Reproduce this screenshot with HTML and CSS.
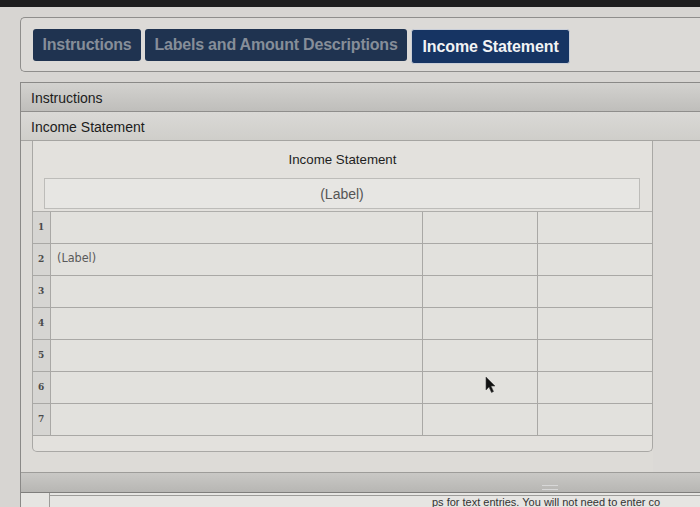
FILE: index.html
```html
<!DOCTYPE html>
<html>
<head>
<meta charset="utf-8">
<link rel="stylesheet" href="styles.css">
</head>
<body>
<div class="topbar"></div>
<div class="wrap">
  <div class="tabbox">
    <div class="tab t1">Instructions</div>
    <div class="tab t2">Labels and Amount Descriptions</div>
    <div class="tab active">Income Statement</div>
  </div>
  <div class="panel">
    <div class="hdr hdr1">Instructions</div>
    <div class="hdr hdr2">Income Statement</div>
    <div class="content">
      <div class="sheet">
        <div class="title">Income Statement</div>
        <div class="labelbox">(Label)</div>
        <div class="grid">
          <div class="row"><div class="num">1</div><div class="c lbl"></div><div class="c amt"></div><div class="c amt"></div></div>
          <div class="row"><div class="num">2</div><div class="c lbl">(Label)</div><div class="c amt"></div><div class="c amt"></div></div>
          <div class="row"><div class="num">3</div><div class="c lbl"></div><div class="c amt"></div><div class="c amt"></div></div>
          <div class="row"><div class="num">4</div><div class="c lbl"></div><div class="c amt"></div><div class="c amt"></div></div>
          <div class="row"><div class="num">5</div><div class="c lbl"></div><div class="c amt"></div><div class="c amt"></div></div>
          <div class="row"><div class="num">6</div><div class="c lbl"></div><div class="c amt"></div><div class="c amt"></div></div>
          <div class="row"><div class="num">7</div><div class="c lbl"></div><div class="c amt"></div><div class="c amt"></div></div>
        </div>
      </div>
      <div class="side"></div>
    </div>
    <div class="bar"><span class="grip"></span></div>
    <div class="next">
      <div class="nbox"></div>
      <div class="ntext">ps for text entries. You will not need to enter co</div>
    </div>
  </div>
</div>
<svg class="cursor" width="12" height="18" viewBox="0 0 12 18"><path d="M1 1 L1 14 L4 11 L6.5 16.5 L8.5 15.5 L6 10 L10 10 Z" fill="#111" stroke="#444" stroke-width="0.6"/></svg>
</body>
</html>
```
FILE: styles.css
```css
html, body {
  margin: 0;
  padding: 0;
  height: 507px;
  overflow: hidden;
}
body {
  background: #d7d5d2;
  font-family: "Liberation Sans", Arial, sans-serif;
  position: relative;
}
.topbar {
  height: 7px;
  background: #1d1d1e;
}
.wrap {
  padding-left: 20px;
}
.tabbox {
  margin-top: 10px;
  border: 1px solid #8f8e8c;
  border-right: none;
  border-radius: 5px 0 0 5px;
  background: #dcdad7;
  padding: 11px 0 0 12px;
  box-sizing: border-box;
  height: 55px;
  display: flex;
  align-items: flex-start;
  gap: 4px;
}
.tab {
  height: 32px;
  line-height: 32px;
  background: #1f3350;
  color: #868e99;
  font-weight: bold;
  font-size: 16px;
  border-radius: 3px;
  letter-spacing: -0.2px;
  text-align: center;
}
.t1 { width: 108px; }
.t2 { width: 262px; }
.tab.active {
  width: 157px;
  height: 33px;
  line-height: 33px;
  background: #163463;
  color: #f2f3f5;
  border: 1px solid #c9ced8;
  letter-spacing: -0.1px;
}
.panel {
  margin-top: 10px;
  border-top: 1px solid #8a8987;
  border-left: 1px solid #8a8987;
}
.hdr {
  font-size: 14px;
  color: #1c1c1c;
  padding-left: 10px;
  box-sizing: border-box;
}
.hdr1 {
  height: 29px;
  line-height: 31px;
  background: linear-gradient(#d3d2cf, #bfbebb);
  border-bottom: 1px solid #8f8e8c;
}
.hdr2 {
  height: 29px;
  line-height: 31px;
  background: linear-gradient(#dad9d6, #cfceca);
  border-bottom: 1px solid #a5a4a1;
}
.content {
  display: flex;
  background: #dddbd7;
  padding-left: 11px;
  height: 331px;
  box-sizing: border-box;
}
.sheet {
  width: 621px;
  height: 311px;
  background: #e3e1dd;
  border-left: 1px solid #a9a8a5;
  border-right: 1px solid #a9a8a5;
  border-bottom: 1px solid #a9a8a5;
  border-radius: 0 0 5px 5px;
  box-sizing: border-box;
}
.side {
  flex: 1;
  background: #dbd9d6;
}
.title {
  height: 37px;
  line-height: 38px;
  text-align: center;
  font-size: 13.3px;
  color: #1e1e1e;
}
.labelbox {
  margin: 0 12px 0 11px;
  height: 31px;
  line-height: 31px;
  border: 1px solid #bdbcb9;
  box-sizing: border-box;
  background: #e7e6e3;
  text-align: center;
  font-size: 14px;
  color: #555;
}
.grid {
  margin-top: 2px;
  border-top: 1px solid #aeadaa;
}
.row {
  display: flex;
  height: 32px;
  border-bottom: 1px solid #a9a8a5;
  box-sizing: border-box;
}
.num {
  width: 18px;
  background: #d6d5d2;
  border-right: 1px solid #a9a8a5;
  box-sizing: border-box;
  font-family: "DejaVu Serif", serif;
  font-size: 9px;
  font-weight: bold;
  color: #4a4a4a;
  padding-left: 5px;
  line-height: 30px;
}
.c {
  box-sizing: border-box;
  border-right: 1px solid #a9a8a5;
  background: #e2e1dd;
}
.lbl {
  width: 372px;
  font-family: "Liberation Sans Narrow", "DejaVu Sans Condensed", "Liberation Sans", sans-serif;
  font-size: 12.5px;
  color: #5a5a5a;
  padding-left: 6px;
  line-height: 28px;
}
.amt { width: 115px; }
.amt:last-child { flex: 1; border-right: none; }
.bar {
  position: relative;
  height: 19px;
  border-top: 1px solid #9d9c99;
  border-bottom: 1px solid #7f7e7c;
  background: linear-gradient(#c9c8c5, #b7b6b3);
}
.grip {
  position: absolute;
  left: 521px;
  top: 12px;
  width: 16px;
  height: 3px;
  border-top: 1px solid #d8d8d8;
  border-bottom: 1px solid #d8d8d8;
}
.next {
  display: flex;
  height: 20px;
  background: #e6e5e2;
}
.nbox {
  width: 28px;
  border-right: 1px solid #9d9c99;
}
.ntext {
  flex: 1;
  border-top: 1px solid #9d9c99;
  margin-top: 2px;
  padding-left: 382px;
  font-size: 11px;
  line-height: 13px;
  color: #333;
  white-space: nowrap;
  overflow: hidden;
}
.cursor {
  position: absolute;
  left: 485px;
  top: 376px;
}
```
